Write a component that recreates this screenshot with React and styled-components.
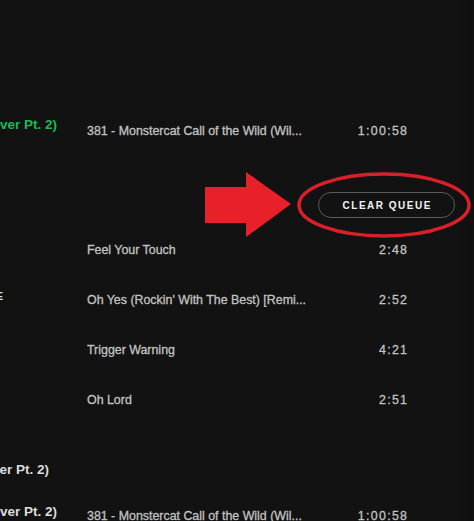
import React from "react";
import styled, { createGlobalStyle } from "styled-components";

const Global = createGlobalStyle`
  html, body { margin: 0; padding: 0; background: #121212; overflow: hidden; }
  #root { width: 474px; height: 521px; }
`;

const Page = styled.div`
  position: relative;
  width: 474px;
  height: 521px;
  overflow: hidden;
  background: linear-gradient(to right, #121212 0, #121212 452px, #0f0f0f 474px);
  display: grid;
  grid-template-columns: 87px 1fr;
  font-family: "Liberation Sans", Arial, sans-serif;
`;

const Side = styled.div`
  display: flex;
  flex-direction: column;
  overflow: hidden;
`;

const SideItem = styled.div`
  height: 16px;
  line-height: 16px;
  margin-top: ${(p) => p.$gap}px;
  padding-right: ${(p) => p.$pad}px;
  display: flex;
  justify-content: flex-end;
  white-space: nowrap;
  overflow: hidden;
  font-size: ${(p) => p.$size || 13.5}px;
  font-weight: 700;
  color: ${(p) => (p.$active ? "#1db954" : "#dcdcdc")};
`;

const Main = styled.div`
  display: flex;
  flex-direction: column;
  padding-top: 106px;
  padding-right: 19px;
`;

const Row = styled.div`
  height: 50px;
  flex-shrink: 0;
  display: grid;
  grid-template-columns: 1fr auto 48px;
  align-items: center;
`;

const Title = styled.div`
  max-width: 230px;
  white-space: nowrap;
  overflow: hidden;
  text-overflow: ellipsis;
  font-size: 12.4px;
  color: #c2c2c2;
  -webkit-text-stroke: 0.3px #c2c2c2;
`;

const Duration = styled.div`
  font-size: 12.4px;
  color: #c2c2c2;
  letter-spacing: 1.3px;
  margin-right: -1.3px;
  -webkit-text-stroke: 0.3px #c2c2c2;
`;

const Header = styled.div`
  height: 69px;
  flex-shrink: 0;
  display: flex;
  justify-content: flex-end;
  align-items: flex-start;
  padding-top: 36px;
  box-sizing: border-box;
`;

const Spacer = styled.div`
  height: ${(p) => p.$h}px;
  flex-shrink: 0;
`;

const ClearButton = styled.button`
  width: 137px;
  height: 26px;
  border-radius: 13px;
  border: 1px solid #5c5c5c;
  background: #121212;
  color: #f2f2f2;
  font-family: "Liberation Sans", Arial, sans-serif;
  font-weight: 700;
  font-size: 10px;
  letter-spacing: 1.5px;
  padding: 0 0 0 1.5px;
  cursor: pointer;
`;

const Overlay = styled.svg`
  position: absolute;
  left: 0;
  top: 0;
  pointer-events: none;
`;

const rows = [
  { title: "Feel Your Touch", time: "2:48" },
  { title: "Oh Yes (Rockin' With The Best) [Remi...", time: "2:52" },
  { title: "Trigger Warning", time: "4:21" },
  { title: "Oh Lord", time: "2:51" },
];

export default function App() {
  return (
    <>
      <Global />
      <Page>
        <Side>
          <SideItem $gap={117} $pad={30} $active>
            Showcase (Forever Pt. 2)
          </SideItem>
          <SideItem $gap={155} $pad={84} $size={11}>
            MONSTERCAT SILK SHOWCASE
          </SideItem>
          <SideItem $gap={158} $pad={38}>
            Showcase (Forever Pt. 2)
          </SideItem>
          <SideItem $gap={26} $pad={30}>
            Showcase (Forever Pt. 2)
          </SideItem>
        </Side>
        <Main>
          <Row>
            <Title>381 - Monstercat Call of the Wild (Wil...</Title>
            <Duration>1:00:58</Duration>
          </Row>
          <Header>
            <ClearButton>CLEAR QUEUE</ClearButton>
          </Header>
          {rows.map((r) => (
            <Row key={r.title}>
              <Title>{r.title}</Title>
              <Duration>{r.time}</Duration>
            </Row>
          ))}
          <Spacer $h={66} />
          <Row>
            <Title>381 - Monstercat Call of the Wild (Wil...</Title>
            <Duration>1:00:58</Duration>
          </Row>
        </Main>
        <Overlay width="474" height="521" viewBox="0 0 474 521">
          <polygon
            points="205,187 246,187 246,172 291,204 246,237 246,223 205,223"
            fill="#e8202a"
          />
          <ellipse
            cx="384"
            cy="205"
            rx="85"
            ry="31"
            fill="none"
            stroke="#d91f29"
            strokeWidth="3.5"
          />
        </Overlay>
      </Page>
    </>
  );
}
